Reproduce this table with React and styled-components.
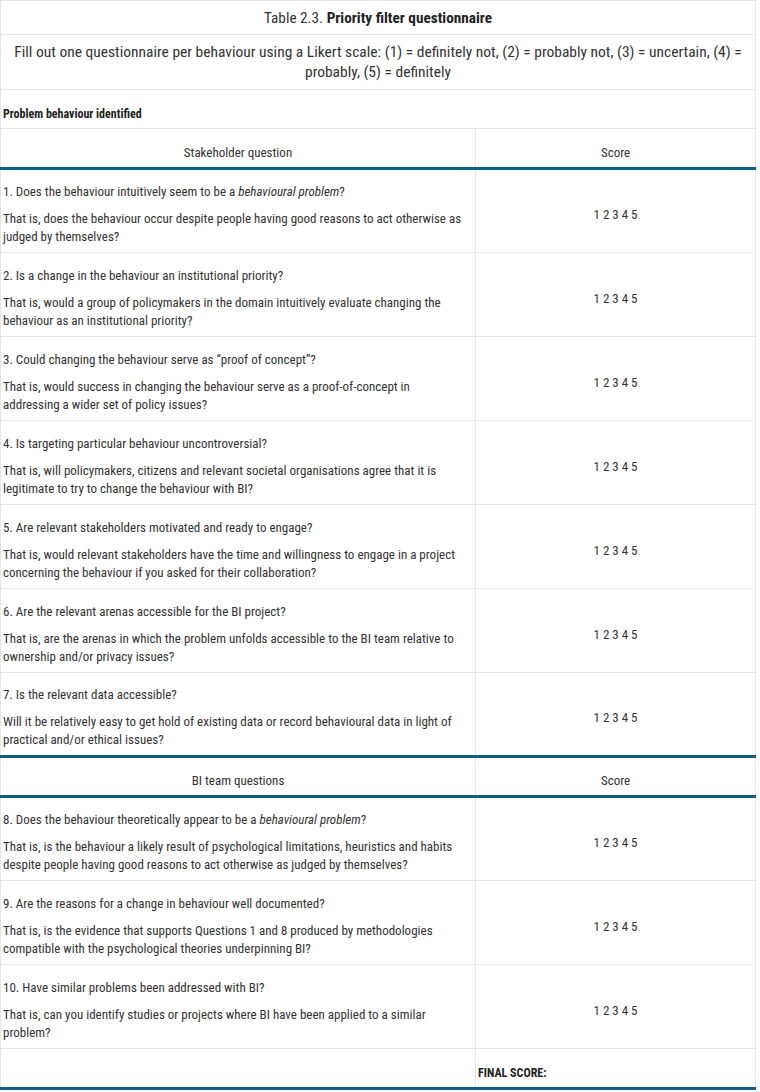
import styled, { createGlobalStyle } from "styled-components";

const GlobalStyle = createGlobalStyle`
  body {
    margin: 0;
    background: #fff;
    font-family: "Roboto Condensed", "Liberation Sans Narrow", Roboto, sans-serif;
    color: #333;
  }
`;

const Table = styled.table`
  width: 756px;
  border-collapse: collapse;
`;

const Cell = styled.td`
  border: 1px solid #e6e6e6;
  padding: ${({ $pad }) => $pad || "0 2px"};
  height: ${({ $h }) => $h}px;
  text-align: ${({ $align }) => $align || "left"};
  vertical-align: ${({ $valign }) => $valign || "middle"};
  font-size: ${({ $size }) => $size || 13}px;
  line-height: ${({ $lh }) => $lh || 18}px;
  font-weight: ${({ $bold }) => ($bold ? 700 : 400)};
  color: ${({ $bold }) => ($bold ? "#222" : "#333")};
  box-sizing: border-box;
`;

const Row = styled.tr`
  border-bottom: ${({ $thick }) => ($thick ? "3px solid #0d5f86" : "1px solid #e6e6e6")};
`;

const Para = styled.p`
  margin: 0;
  & + & {
    margin-top: 9px;
  }
`;

const Bold = styled.b`
  font-weight: 700;
  color: #222;
`;

const stakeholder = [
  [
    <>1. Does the behaviour intuitively seem to be a <i>behavioural problem</i>?</>,
    "That is, does the behaviour occur despite people having good reasons to act otherwise as judged by themselves?",
  ],
  [
    "2. Is a change in the behaviour an institutional priority?",
    "That is, would a group of policymakers in the domain intuitively evaluate changing the behaviour as an institutional priority?",
  ],
  [
    "3. Could changing the behaviour serve as \u201cproof of concept\u201d?",
    "That is, would success in changing the behaviour serve as a proof-of-concept in addressing a wider set of policy issues?",
  ],
  [
    "4. Is targeting particular behaviour uncontroversial?",
    "That is, will policymakers, citizens and relevant societal organisations agree that it is legitimate to try to change the behaviour with BI?",
  ],
  [
    "5. Are relevant stakeholders motivated and ready to engage?",
    "That is, would relevant stakeholders have the time and willingness to engage in a project concerning the behaviour if you asked for their collaboration?",
  ],
  [
    "6. Are the relevant arenas accessible for the BI project?",
    "That is, are the arenas in which the problem unfolds accessible to the BI team relative to ownership and/or privacy issues?",
  ],
  [
    "7. Is the relevant data accessible?",
    "Will it be relatively easy to get hold of existing data or record behavioural data in light of practical and/or ethical issues?",
  ],
];

const biTeam = [
  [
    <>8. Does the behaviour theoretically appear to be a <i>behavioural problem</i>?</>,
    "That is, is the behaviour a likely result of psychological limitations, heuristics and habits despite people having good reasons to act otherwise as judged by themselves?",
  ],
  [
    "9. Are the reasons for a change in behaviour well documented?",
    "That is, is the evidence that supports Questions 1 and 8 produced by methodologies compatible with the psychological theories underpinning BI?",
  ],
  [
    "10. Have similar problems been addressed with BI?",
    "That is, can you identify studies or projects where BI have been applied to a similar problem?",
  ],
];

const QuestionRows = ({ items, lastThick }) =>
  items.map(([q, detail], i) => (
    <Row key={i} $thick={lastThick && i === items.length - 1}>
      <Cell $h={84} $pad="7px 8px 0 2px">
        <Para>{q}</Para>
        <Para>{detail}</Para>
      </Cell>
      <Cell $h={84} $align="center" $pad="8px 2px 0">1 2 3 4 5</Cell>
    </Row>
  ));

export default function App() {
  return (
    <>
      <GlobalStyle />
      <Table>
        <colgroup>
          <col style={{ width: 475 }} />
          <col />
        </colgroup>
        <tbody>
          <Row>
            <Cell colSpan={2} $h={34} $align="center" $size={15.25}>
              Table 2.3. <Bold>Priority filter questionnaire</Bold>
            </Cell>
          </Row>
          <Row>
            <Cell colSpan={2} $h={55} $align="center" $size={15.5} $lh={20} $pad="0 8px">
              Fill out one questionnaire per behaviour using a Likert scale: (1) = definitely not, (2) = probably not, (3) = uncertain, (4) = probably, (5) = definitely
            </Cell>
          </Row>
          <Row>
            <Cell colSpan={2} $h={39} $bold $size={12} $pad="9px 2px 0">
              Problem behaviour identified
            </Cell>
          </Row>
          <Row $thick>
            <Cell $h={40} $align="center" $pad="10px 2px 0">Stakeholder question</Cell>
            <Cell $h={40} $align="center" $pad="10px 2px 0">Score</Cell>
          </Row>
          <QuestionRows items={stakeholder} lastThick />
          <Row $thick>
            <Cell $h={40} $align="center" $pad="8px 2px 0">BI team questions</Cell>
            <Cell $h={40} $align="center" $pad="8px 2px 0">Score</Cell>
          </Row>
          <QuestionRows items={biTeam} />
          <Row $thick>
            <Cell $h={40} />
            <Cell $h={40} $bold $size={12} $valign="bottom" $pad="0 2px 5px">
              FINAL SCORE:
            </Cell>
          </Row>
        </tbody>
      </Table>
    </>
  );
}
